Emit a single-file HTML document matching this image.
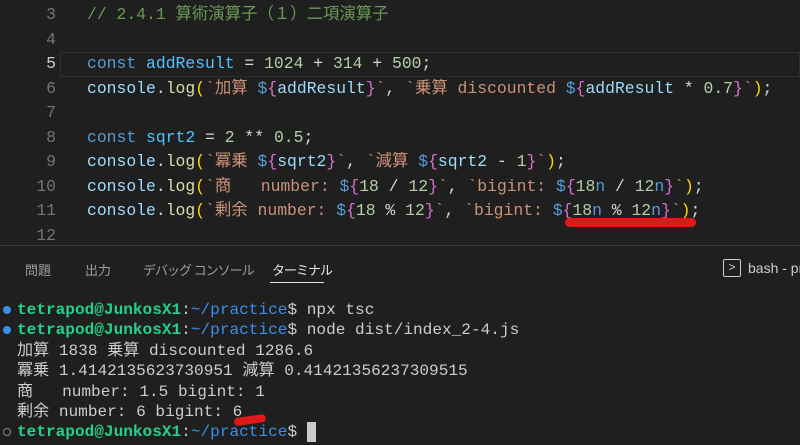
<!DOCTYPE html>
<html><head><meta charset="utf-8"><style>
*{margin:0;padding:0;box-sizing:border-box}
body{width:800px;height:445px;background:#1f1f1f;overflow:hidden;position:relative;font-family:"Liberation Mono","Noto Sans CJK JP",monospace}
.ln{position:absolute;left:0;width:56px;text-align:right;color:#6e7681;font-size:16.4px;line-height:24.5px;white-space:pre}
.cl{position:absolute;left:87px;font-size:16.4px;line-height:24.5px;white-space:pre;color:#d4d4d4}
.cm{color:#6a9955}.kw{color:#569cd6}.v{color:#4fc1ff}.n{color:#b5cea8}.s{color:#ce9178}.f{color:#dcdcaa}.c{color:#9cdcfe}.y{color:#ffd700}.p{color:#da70d6}
.t{position:absolute;left:17px;font-size:16.1px;line-height:20.4px;white-space:pre;color:#cccccc}
.g{color:#23d18b;font-weight:bold}.b{color:#3b8eea}
.tab{position:absolute;top:260px;font-family:"Liberation Sans","Noto Sans CJK JP",sans-serif;font-size:13px;color:#9d9d9d;white-space:nowrap}
.dot{position:absolute;left:3px;width:8px;height:8px;border-radius:50%;background:#3b8eea}
</style></head><body>
<div style="position:absolute;left:60px;top:52px;width:740px;height:25px;border:1px solid #2e2e2e"></div>
<div class="ln" style="top:3px">3</div>
<div class="ln" style="top:27.5px">4</div>
<div class="ln" style="top:52px;color:#ccc">5</div>
<div class="ln" style="top:76.5px">6</div>
<div class="ln" style="top:101px">7</div>
<div class="ln" style="top:125.5px">8</div>
<div class="ln" style="top:150px">9</div>
<div class="ln" style="top:174.5px">10</div>
<div class="ln" style="top:199px">11</div>
<div class="ln" style="top:223.5px">12</div>
<div class="cl" style="top:3px"><span class="cm">// 2.4.1 算術演算子（１）二項演算子</span></div>
<div class="cl" style="top:52px"><span class="kw">const</span> <span class="v">addResult</span> = <span class="n">1024</span> + <span class="n">314</span> + <span class="n">500</span>;</div>
<div class="cl" style="top:76.5px"><span class="c">console</span>.<span class="f">log</span><span class="y">(</span><span class="s">`加算 </span><span class="kw">$</span><span class="p">{</span><span class="c">addResult</span><span class="p">}</span><span class="s">`</span>, <span class="s">`乗算 discounted </span><span class="kw">$</span><span class="p">{</span><span class="c">addResult</span> * <span class="n">0.7</span><span class="p">}</span><span class="s">`</span><span class="y">)</span>;</div>
<div class="cl" style="top:125.5px"><span class="kw">const</span> <span class="v">sqrt2</span> = <span class="n">2</span> ** <span class="n">0.5</span>;</div>
<div class="cl" style="top:150px"><span class="c">console</span>.<span class="f">log</span><span class="y">(</span><span class="s">`冪乗 </span><span class="kw">$</span><span class="p">{</span><span class="c">sqrt2</span><span class="p">}</span><span class="s">`</span>, <span class="s">`減算 </span><span class="kw">$</span><span class="p">{</span><span class="c">sqrt2</span> - <span class="n">1</span><span class="p">}</span><span class="s">`</span><span class="y">)</span>;</div>
<div class="cl" style="top:174.5px"><span class="c">console</span>.<span class="f">log</span><span class="y">(</span><span class="s">`商   number: </span><span class="kw">$</span><span class="p">{</span><span class="n">18</span> / <span class="n">12</span><span class="p">}</span><span class="s">`</span>, <span class="s">`bigint: </span><span class="kw">$</span><span class="p">{</span><span class="n">18</span><span class="kw">n</span> / <span class="n">12</span><span class="kw">n</span><span class="p">}</span><span class="s">`</span><span class="y">)</span>;</div>
<div class="cl" style="top:199px"><span class="c">console</span>.<span class="f">log</span><span class="y">(</span><span class="s">`剰余 number: </span><span class="kw">$</span><span class="p">{</span><span class="n">18</span> % <span class="n">12</span><span class="p">}</span><span class="s">`</span>, <span class="s">`bigint: </span><span class="kw">$</span><span class="p">{</span><span class="n">18</span><span class="kw">n</span> % <span class="n">12</span><span class="kw">n</span><span class="p">}</span><span class="s">`</span><span class="y">)</span>;</div>
<div style="position:absolute;left:565px;top:218px;width:131px;height:9px;border-radius:5px;background:#e01818"></div>
<div style="position:absolute;left:0;top:245px;width:800px;height:1px;background:#3a3a3a"></div>
<div class="tab" style="left:25px">問題</div>
<div class="tab" style="left:85px">出力</div>
<div class="tab" style="left:143px;letter-spacing:-1px">デバッグ コンソール</div>
<div class="tab" style="left:272px;color:#e7e7e7;letter-spacing:-1px">ターミナル</div>
<div style="position:absolute;left:270px;top:282px;width:54px;height:1px;background:#e7e7e7"></div>
<div style="position:absolute;left:723px;top:259px;width:18px;height:18px;border:1.5px solid #ccc;border-radius:2px;color:#ccc;font-size:12px;line-height:15px;text-align:center;font-family:'Liberation Sans'">&gt;</div>
<div class="tab" style="left:748px;color:#ccc;font-size:14px">bash - pr</div>
<div class="dot" style="top:306px"></div>
<div class="dot" style="top:326px"></div>
<div class="dot" style="top:428px;background:none;border:1.5px solid #888"></div>
<div class="t" style="top:300px"><span class="g">tetrapod@JunkosX1</span>:<span class="b">~/practice</span>$ npx tsc</div>
<div class="t" style="top:320.4px"><span class="g">tetrapod@JunkosX1</span>:<span class="b">~/practice</span>$ node dist/index_2-4.js</div>
<div class="t" style="top:340.8px">加算 1838 乗算 discounted 1286.6</div>
<div class="t" style="top:361.2px">冪乗 1.4142135623730951 減算 0.41421356237309515</div>
<div class="t" style="top:381.6px">商   number: 1.5 bigint: 1</div>
<div class="t" style="top:402px">剰余 number: 6 bigint: 6</div>
<div class="t" style="top:422.4px"><span class="g">tetrapod@JunkosX1</span>:<span class="b">~/practice</span>$ </div>
<div style="position:absolute;left:307px;top:422px;width:9px;height:20px;background:#ccc"></div>
<div style="position:absolute;left:234px;top:416px;width:32px;height:8px;border-radius:4px;background:#e01818;transform:rotate(-8deg)"></div>
</body></html>
